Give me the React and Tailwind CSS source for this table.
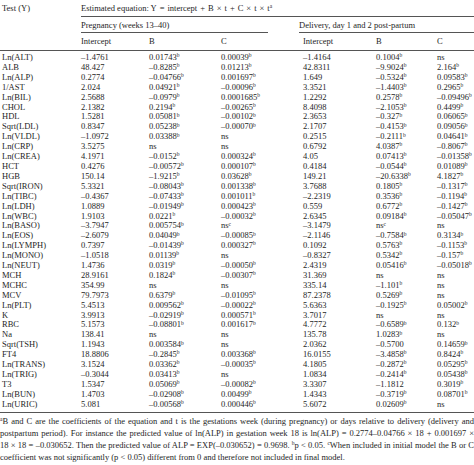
import React from "react";

const rows = [
  ["Ln(ALT)", "–1.4761", "0.01743^b", "0.00039^b", "–1.4164", "0.1004^b", "ns"],
  ["ALB", "48.427", "–0.8285^b", "0.01213^b", "42.8311", "–9.9024^b", "2.164^b"],
  ["Ln(ALP)", "0.2774", "–0.04766^b", "0.001697^b", "1.649", "–0.5324^b", "0.09583^b"],
  ["1/AST", "2.024", "0.04921^b", "–0.00096^b", "3.3521", "–1.4403^b", "0.2965^b"],
  ["Ln(BIL)", "2.5688", "–0.0979^b", "0.0001685^b", "1.2292", "0.2578^b", "–0.09496^b"],
  ["CHOL", "2.1382", "0.2194^b", "–0.00265^b", "8.4098", "–2.1053^b", "0.4499^b"],
  ["HDL", "1.5281", "0.05081^b", "–0.00102^b", "2.3653", "–0.327^b", "0.06065^b"],
  ["Sqrt(LDL)", "0.8347", "0.05238^b", "–0.00070^b", "2.1707", "–0.4153^b", "0.09056^b"],
  ["Ln(VLDL)", "–1.0972", "0.03388^b", "ns", "0.2515", "–0.2111^b", "0.04641^b"],
  ["Ln(CRP)", "3.5275", "ns", "ns", "0.6792", "4.0387^b", "–0.8067^b"],
  ["Ln(CREA)", "4.1971", "–0.0152^b", "0.000324^b", "4.05", "0.07413^b", "–0.01358^b"],
  ["HCT", "0.4276", "–0.00572^b", "0.000107^b", "0.4184", "–0.0544^b", "0.01089^b"],
  ["HGB", "150.14", "–1.9215^b", "0.03628^b", "149.21", "–20.6338^b", "4.1827^b"],
  ["Sqrt(IRON)", "5.3321", "–0.08043^b", "0.001338^b", "3.7688", "0.1805^b", "–0.1317^b"],
  ["Ln(TIBC)", "–0.4367", "–0.07433^b", "0.001011^b", "–2.2319", "0.3536^b", "–0.1194^b"],
  ["Ln(LDH)", "1.0889", "–0.01949^b", "0.000423^b", "0.559", "0.6772^b", "–0.1427^b"],
  ["Ln(WBC)", "1.9103", "0.0221^b", "–0.00032^b", "2.6345", "0.09184^b", "–0.05047^b"],
  ["Ln(BASO)", "–3.7947", "0.005754^b", "ns^c", "–3.1479", "ns^c", "ns"],
  ["Ln(EOS)", "–2.6079", "0.04049^b", "–0.00085^b", "–2.1146", "–0.7584^b", "0.3134^b"],
  ["Ln(LYMPH)", "0.7397", "–0.01439^b", "0.000327^b", "0.1092", "0.5763^b", "–0.1153^b"],
  ["Ln(MONO)", "–1.0518", "0.01139^b", "ns", "–0.8327", "0.5342^b", "–0.157^b"],
  ["Ln(NEUT)", "1.4736", "0.0319^b", "–0.00050^b", "2.4319", "0.05416^b", "–0.05018^b"],
  ["MCH", "28.9161", "0.1824^b", "–0.00307^b", "31.369", "ns", "ns"],
  ["MCHC", "354.99", "ns", "ns", "335.14", "–1.101^b", "ns"],
  ["MCV", "79.7973", "0.6379^b", "–0.01095^b", "87.2378", "0.5269^b", "ns"],
  ["Ln(PLT)", "5.4513", "0.009562^b", "–0.00022^b", "5.6363", "–0.1925^b", "0.05002^b"],
  ["K", "3.9913", "–0.02919^b", "0.000571^b", "3.7017", "ns", "ns"],
  ["RBC", "5.1573", "–0.08801^b", "0.001617^b", "4.7772", "–0.6589^b", "0.132^b"],
  ["Na", "138.41", "ns", "ns", "135.78", "1.0283^b", "ns"],
  ["Sqrt(TSH)", "1.1943", "0.003584^b", "ns", "2.0362", "–0.5700", "0.14659^b"],
  ["FT4", "18.8806", "–0.2845^b", "0.003368^b", "16.0155", "–3.4858^b", "0.8424^b"],
  ["Ln(TRANS)", "3.1524", "0.03362^b", "–0.00035^b", "4.1805", "–0.2872^b", "0.05295^b"],
  ["Ln(TRIG)", "–0.3044", "0.03413^b", "ns", "1.0834", "–0.2414^b", "0.05438^b"],
  ["T3", "1.5347", "0.05069^b", "–0.00082^b", "3.3307", "–1.1812", "0.3019^b"],
  ["Ln(BUN)", "1.4703", "–0.02908^b", "0.00499^b", "1.4343", "–0.3719^b", "0.08701^b"],
  ["Ln(URIC)", "5.081", "–0.00568^b", "0.000446^b", "5.6072", "0.02609^b", "ns"],
];

function Val({ v }) {
  const [main, sup] = v.split("^");
  return (
    <span className="whitespace-nowrap">
      {main}
      {sup && <sup className="text-[5.5px]">{sup}</sup>}
    </span>
  );
}

function Op({ c }) {
  return <span className="px-[3px]">{c}</span>;
}

const grid = "grid grid-cols-[81px_68px_72px_82px_73px_61px_37px]";

export default function App() {
  return (
    <div
      className="w-[474px] h-[465px] overflow-hidden bg-white text-[#1e1e1e] text-[8.5px]"
      style={{ fontFamily: '"Liberation Serif", "Times New Roman", serif' }}
    >
      {/* header row 1 */}
      <div className={`${grid} h-[17px]`}>
        <div className="pl-[2px] pt-[3px] leading-[10px]">Test (Y)</div>
        <div className="col-span-6 pt-[3px] leading-[10px] border-b border-[#555] whitespace-nowrap">
          Estimated equation: Y<Op c="=" />intercept<Op c="+" />B<Op c="×" />t<Op c="+" />C<Op c="×" />t<Op c="×" />t
          <sup className="text-[5.5px]">a</sup>
        </div>
      </div>
      {/* header row 2 */}
      <div className={`${grid} h-[16px]`}>
        <div />
        <div className="col-span-3 mr-[35px] pt-[3px] leading-[10px] border-b border-[#555]">
          Pregnancy (weeks 13–40)
        </div>
        <div className="col-span-3 -ml-[4px] pt-[3px] leading-[10px] border-b border-[#555]">
          Delivery, day 1 and 2 post-partum
        </div>
      </div>
      {/* header row 3 */}
      <div className={`${grid} h-[18px] border-b border-[#555]`}>
        <div />
        <div className="pt-[3px] leading-[10px]">Intercept</div>
        <div className="pt-[3px] leading-[10px]">B</div>
        <div className="pt-[3px] leading-[10px]">C</div>
        <div className="pt-[3px] leading-[10px]">Intercept</div>
        <div className="pt-[3px] leading-[10px]">B</div>
        <div className="pt-[3px] leading-[10px]">C</div>
      </div>
      {/* body */}
      <div className="pt-[2px] pb-[2px] border-b border-[#555]">
        {rows.map((r) => (
          <div key={r[0]} className={`${grid} h-[9.914px] leading-[9.914px]`}>
            <div className="pl-[2px] whitespace-nowrap">{r[0]}</div>
            {r.slice(1).map((v, i) => (
              <div key={i}>
                <Val v={v} />
              </div>
            ))}
          </div>
        ))}
      </div>
      {/* footnote */}
      <div className="pt-[2px] leading-[12px] text-justify">
        <div className="[text-align-last:justify] whitespace-nowrap">
          <sup className="text-[5.5px]">a</sup>B and C are the coefficients of the equation and t is the gestations week (during pregnancy) or days relative to delivery (delivery and
        </div>
        <div className="[text-align-last:justify] whitespace-nowrap">
          postpartum period). For instance the predicted value of ln(ALP) in gestation week 18 is ln(ALP) = 0.2774–0.04766 × 18 + 0.001697 ×
        </div>
        <div className="[text-align-last:justify] whitespace-nowrap">
          18 × 18 = –0.030652. Then the predicted value of ALP = EXP(–0.030652) = 0.9698. <sup className="text-[5.5px]">b</sup>p &lt; 0.05. <sup className="text-[5.5px]">c</sup>When included in initial model the B or C
        </div>
        <div className="whitespace-nowrap">
          coefficient was not significantly (p &lt; 0.05) different from 0 and therefore not included in final model.
        </div>
      </div>
    </div>
  );
}
